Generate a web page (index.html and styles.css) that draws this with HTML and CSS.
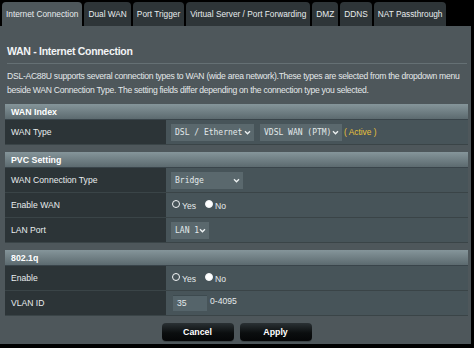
FILE: index.html
```html
<!DOCTYPE html>
<html lang="en">
<head>
    <meta charset="UTF-8">
    <meta name="viewport" content="width=device-width, initial-scale=1.0">
    <title>WAN - Internet Connection</title>
    <link rel="stylesheet" href="styles.css">
</head>
<body>
    <div class="tabs">
        <div class="tab active">Internet Connection</div>
        <div class="tab">Dual WAN</div>
        <div class="tab">Port Trigger</div>
        <div class="tab">Virtual Server / Port Forwarding</div>
        <div class="tab">DMZ</div>
        <div class="tab">DDNS</div>
        <div class="tab">NAT Passthrough</div>
    </div>

    <div class="panel">
        <h2 class="title">WAN - Internet Connection</h2>
        <div class="rule"></div>
        <p class="desc">DSL-AC88U supports several connection types to WAN (wide area network).These types are selected from the dropdown menu beside WAN Connection Type. The setting fields differ depending on the connection type you selected.</p>

        <div class="group">
            <div class="group-head">WAN Index</div>
            <div class="row">
                <div class="label">WAN Type</div>
                <div class="field">
                    <span class="select w-dsl">DSL / Ethernet<svg class="chev" viewBox="0 0 8 6"><polyline points="1,1.5 4,4.5 7,1.5"/></svg></span>
                    <span class="select w-vdsl">VDSL WAN (PTM)<svg class="chev" viewBox="0 0 8 6"><polyline points="1,1.5 4,4.5 7,1.5"/></svg></span>
                    <span class="active-note">( Active )</span>
                </div>
            </div>
        </div>

        <div class="group">
            <div class="group-head">PVC Setting</div>
            <div class="row">
                <div class="label">WAN Connection Type</div>
                <div class="field">
                    <span class="select w-bridge">Bridge<svg class="chev" viewBox="0 0 8 6"><polyline points="1,1.5 4,4.5 7,1.5"/></svg></span>
                </div>
            </div>
            <div class="row">
                <div class="label">Enable WAN</div>
                <div class="field">
                    <span class="radio"></span><span class="opt">Yes</span>
                    <span class="radio on"></span><span class="opt">No</span>
                </div>
            </div>
            <div class="row">
                <div class="label">LAN Port</div>
                <div class="field">
                    <span class="select w-lan">LAN 1<svg class="chev" viewBox="0 0 8 6"><polyline points="1,1.5 4,4.5 7,1.5"/></svg></span>
                </div>
            </div>
        </div>

        <div class="group">
            <div class="group-head">802.1q</div>
            <div class="row">
                <div class="label">Enable</div>
                <div class="field">
                    <span class="radio"></span><span class="opt">Yes</span>
                    <span class="radio on"></span><span class="opt">No</span>
                </div>
            </div>
            <div class="row">
                <div class="label">VLAN ID</div>
                <div class="field">
                    <span class="input">35</span>
                    <span class="hint">0-4095</span>
                </div>
            </div>
        </div>

        <div class="actions">
            <button class="btn">Cancel</button>
            <button class="btn">Apply</button>
        </div>
    </div>
</body>
</html>
```

FILE: styles.css
```css
body {
    margin: 0;
    background: #000;
    font-family: "Liberation Sans", Arial, sans-serif;
    color: #e6eaeb;
    width: 474px;
    height: 348px;
    overflow: hidden;
}
.tabs {
    display: flex;
    gap: 2px;
    padding: 2px 0 0 2px;
    height: 24px;
}
.tab {
    background: #2e3538;
    border-radius: 4px 4px 0 0;
    padding: 0 4px;
    font-size: 8.3px;
    line-height: 25px;
    color: #e8ecee;
    white-space: nowrap;
}
.tab.active {
    background: #4e575b;
}
.panel {
    width: 466px;
    height: 318px;
    background: #4e575b;
    padding: 0 0 0 5px;
}
.title {
    margin: 0;
    padding: 17px 0 0 2px;
    font-size: 10.5px;
    letter-spacing: -0.3px;
    font-weight: bold;
    line-height: 16px;
    color: #f2f4f5;
}
.rule {
    height: 1px;
    background: #657074;
    margin: 4px 4px 0 2px;
}
.desc {
    margin: 5px 0 0 2px;
    font-size: 8.6px;
    letter-spacing: -0.28px;
    line-height: 14px;
    color: #e4e8ea;
    width: 464px;
}
.group {
    width: 463px;
    margin-top: 7px;
    background: #2f383b;
}
.group-head {
    height: 15px;
    line-height: 16px;
    padding-left: 6px;
    font-size: 8.8px;
    font-weight: bold;
    color: #fff;
    background: linear-gradient(#85959a, #5c6a6f);
    border-bottom: 1px solid #39444a;
}
.row {
    display: grid;
    grid-template-columns: 161px 1fr;
    height: 24px;
    border-bottom: 1px solid #3a4447;
}
.label {
    background: #2c3437;
    padding-left: 6px;
    font-size: 8.6px;
    line-height: 24px;
    color: #e8ecee;
}
.field {
    background: #475459;
    display: flex;
    align-items: center;
    padding-left: 5px;
    gap: 6px;
}
.select {
    display: inline-flex;
    align-items: center;
    justify-content: space-between;
    height: 17px;
    padding: 0 3px 0 4px;
    box-sizing: border-box;
    background: #5a686d;
    font-family: "DejaVu Sans Mono", "Liberation Mono", monospace;
    font-size: 8px;
    color: #e2e8ea;
    white-space: pre;
}
.w-dsl { width: 83px; }
.w-vdsl { width: 82px; }
.w-bridge { width: 72px; }
.w-lan { width: 38px; }
.chev {
    width: 7px;
    height: 5px;
    fill: none;
    stroke: #eef2f3;
    stroke-width: 1.6;
}
.active-note {
    margin-left: -4px;
    font-size: 8.4px;
    color: #e9c23c;
}
.radio {
    width: 6px;
    height: 6px;
    border: 1.5px solid #f4f6f7;
    border-radius: 50%;
    margin-left: 1px;
    margin-top: -3px;
}
.radio.on {
    background: #fff;
    margin-left: 3px;
}
.opt {
    font-size: 8.6px;
    margin-left: -4px;
    margin-top: 2px;
}
.input {
    width: 34px;
    height: 16px;
    box-sizing: border-box;
    background: #55646a;
    border-top: 1px solid #3d4a4f;
    padding-left: 4px;
    font-size: 8.6px;
    line-height: 15px;
    margin-left: 2px;
}
.hint {
    font-size: 8.6px;
    margin-left: -3px;
    margin-top: -4px;
}
.actions {
    display: flex;
    justify-content: center;
    gap: 6px;
    margin-top: 7px;
    padding-right: 3px;
}
.btn {
    width: 72px;
    height: 18px;
    border: none;
    border-radius: 4px;
    background: linear-gradient(#2a3134, #0b0e0f 55%, #050607);
    color: #fff;
    font-family: "Liberation Sans", Arial, sans-serif;
    font-size: 8.8px;
    font-weight: bold;
    box-shadow: 0 1px 0 #3d4548;
}
```
